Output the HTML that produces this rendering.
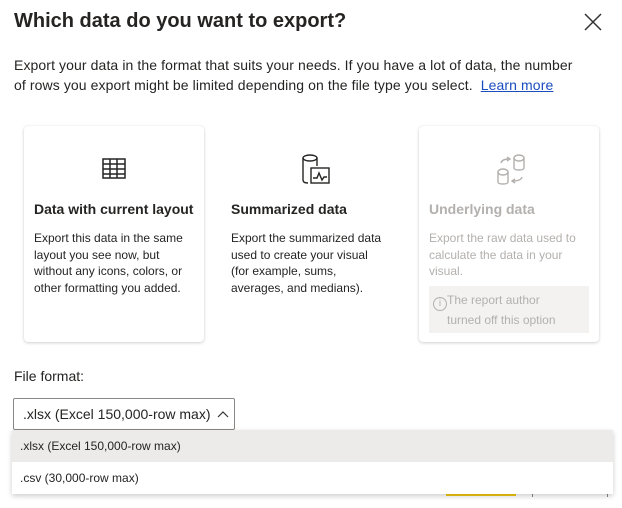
<!DOCTYPE html><html><head><style>
body{margin:0;width:622px;height:508px;background:#fff;font-family:"Liberation Sans",sans-serif;color:#252423;position:relative;overflow:hidden}
.a{position:absolute}
.card{position:absolute;top:126px;width:180px;height:216px;border-radius:4px;box-shadow:0 1px 3px rgba(0,0,0,.18),0 0 1px rgba(0,0,0,.1);background:#fff}
.ct{position:absolute;left:10px;top:75px;font-size:14px;font-weight:bold}
.cd{position:absolute;left:10px;top:104px;font-size:12px;line-height:16.5px;width:165px}
</style></head><body>
<div class="a" style="left:14px;top:10px;font-size:20px;font-weight:bold">Which data do you want to export?</div>
<svg class="a" style="left:584px;top:13px" width="18" height="18"><path d="M1 1L17 17M17 1L1 17" stroke="#333" stroke-width="1.5"/></svg>
<div class="a" style="left:14px;top:55px;font-size:14px;line-height:20px;width:572px;letter-spacing:0.1px">Export your data in the format that suits your needs. If you have a lot of data, the number of rows you export might be limited depending on the file type you select.&nbsp; <span style="color:#1a4dbf;text-decoration:underline">Learn more</span></div>
<div class="card" style="left:24px">
<svg class="a" style="left:78px;top:32px" width="24" height="22" fill="none" stroke="#252423" stroke-width="1.5"><rect x="1" y="1" width="22" height="19"/><path d="M1 6H23M1 11H23M1 16H23M8 1V20M15 1V20"/></svg>
<div class="ct">Data with current layout</div>
<div class="cd">Export this data in the same layout you see now, but without any icons, colors, or other formatting you added.</div></div>
<div class="a" style="left:235px;top:139px;width:8px;height:8px;border-radius:50%;background:#252423"></div>
<div class="card" style="left:221px;box-shadow:none">
<svg class="a" style="left:80px;top:28px" width="30" height="34" fill="none" stroke="#252423" stroke-width="1.4"><ellipse cx="9" cy="4" rx="7" ry="3"/><path d="M2 4V26Q2 29 7 29M16 4V12"/><rect x="10" y="14" width="18" height="15"/><path d="M12 24L16 24L18 19L21 26L23 23L26 23"/></svg>
<div class="ct">Summarized data</div>
<div class="cd" style="width:156px">Export the summarized data used to create your visual (for example, sums, averages, and medians).</div></div>
<div class="card" style="left:419px;color:#b3b0ad">
<svg class="a" style="left:77px;top:27px" width="32" height="34" fill="none" stroke="#b3b0ad" stroke-width="1.4"><ellipse cx="23" cy="5" rx="5" ry="3"/><path d="M18 5V15Q18 17 23 17Q28 17 28 15V5"/><ellipse cx="7" cy="19" rx="5" ry="3"/><path d="M2 19V29Q2 31 7 31Q12 31 12 29V19M5 10Q6 6 13 6M11 4L14 6L11 8M26 24Q25 28 17 28M19 26L16 28L19 30"/></svg>
<div class="ct">Underlying data</div>
<div class="cd">Export the raw data used to calculate the data in your visual.</div>
<div class="a" style="left:10px;top:160px;width:160px;height:47px;background:#f3f2f1;font-size:12px;line-height:18px"><div style="padding:5px 0 0 4px"><span style="display:inline-block;width:12px;height:12px;border:1px solid #b3b0ad;border-radius:50%;font-size:10px;line-height:12px;text-align:center;vertical-align:-2px">i</span>The report author<br><span style="padding-left:14px">turned off this option</span></div></div></div>
<div class="a" style="left:14px;top:368px;font-size:14px">File format:</div>
<div class="a" style="left:13px;top:398px;height:30px;border:1px solid #8a8886;border-radius:2px;font-size:14px;line-height:30px;padding-left:9px;box-sizing:content-box;width:211px">.xlsx (Excel 150,000-row max)<svg style="position:absolute;left:203px;top:11px" width="12" height="8"><path d="M1 7L6 2L11 7" stroke="#333" fill="none" stroke-width="1.2"/></svg></div>
<div class="a" style="left:446px;top:488px;width:70px;height:8px;background:#f2c811"></div>
<div class="a" style="left:532px;top:488px;width:74px;height:8px;border:1px solid #8a8886;border-bottom:none"></div>
<div class="a" style="left:12px;top:430px;width:601px;height:64px;background:#fff;box-shadow:0 2px 5px rgba(0,0,0,.2);font-size:12px">
<div style="height:32px;background:#edebe9;line-height:32px;padding-left:8px">.xlsx (Excel 150,000-row max)</div>
<div style="height:32px;line-height:32px;padding-left:8px">.csv (30,000-row max)</div></div>
</body></html>
